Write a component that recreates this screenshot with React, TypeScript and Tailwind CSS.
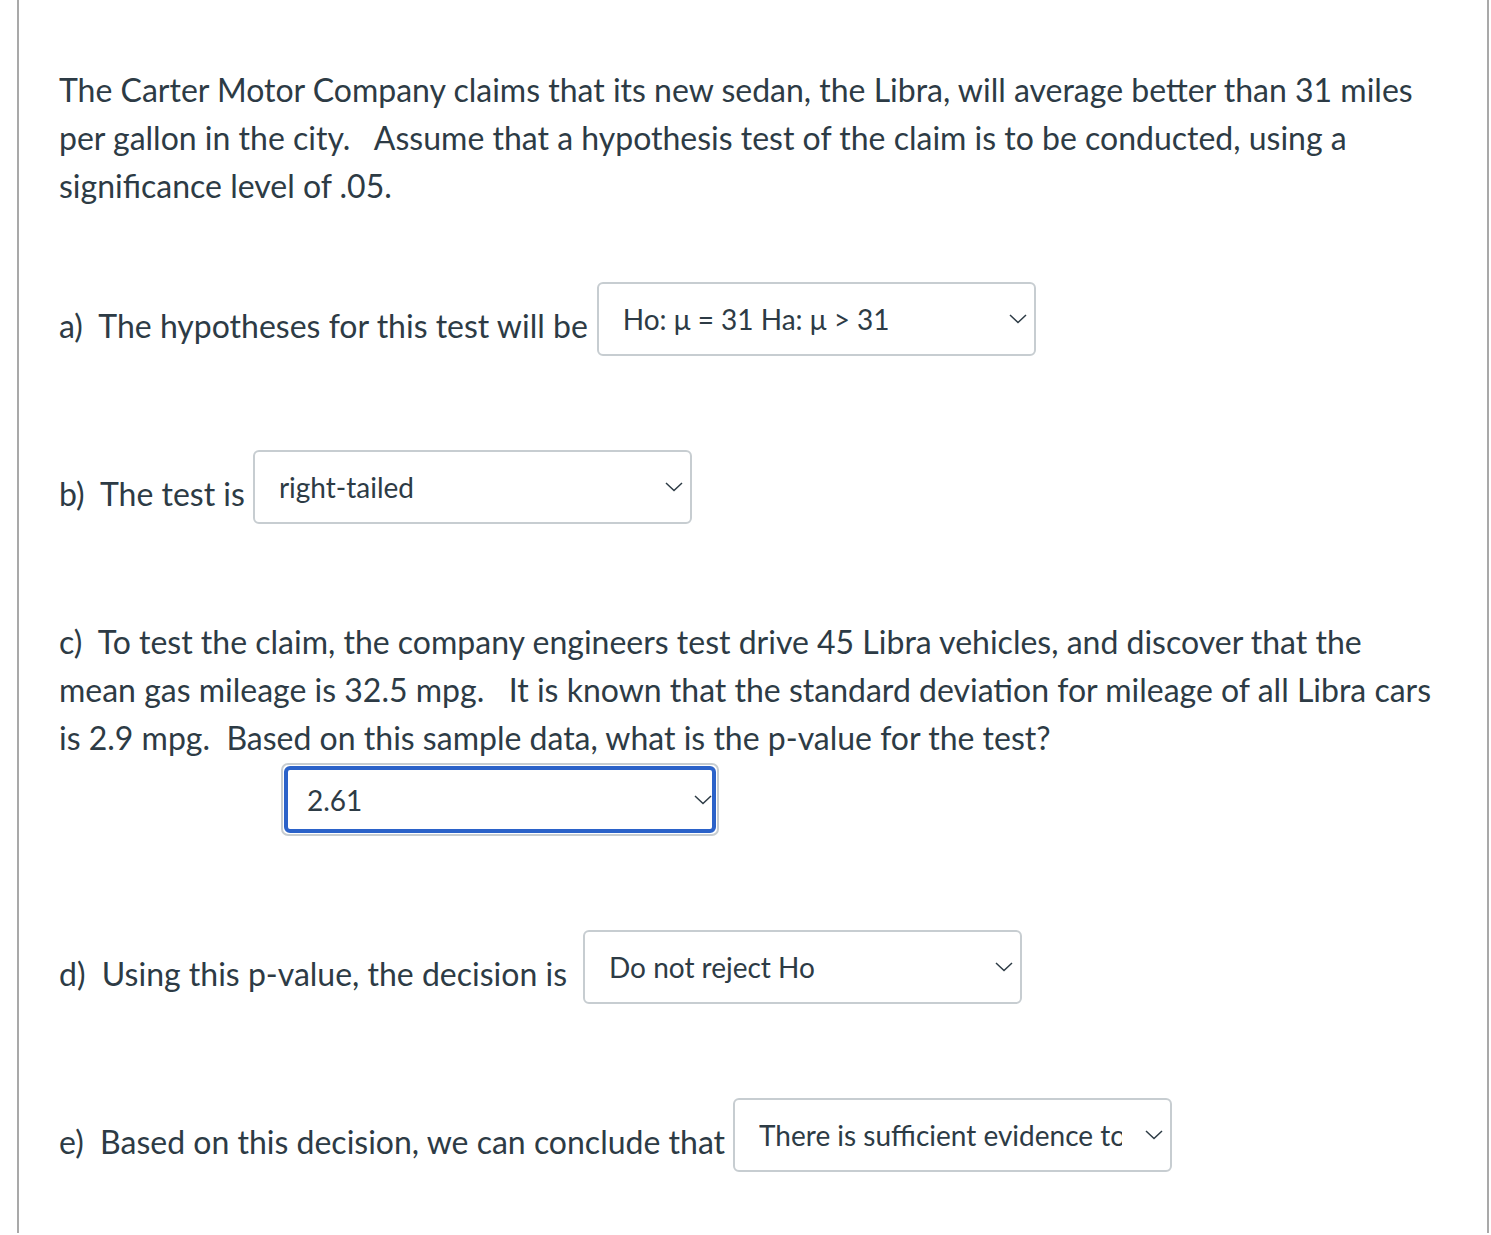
import React from "react";

const Chevron = () => (
  <svg width="18" height="10" viewBox="0 0 18 10" fill="none" className="block">
    <polyline points="1,1 9,8.5 17,1" stroke="#2d3b45" strokeWidth="1.5" strokeLinejoin="miter" />
  </svg>
);

const Select = ({ value }: { value: string }) => (
  <div className="relative flex h-[74px] w-[439px] shrink-0 items-center rounded-[6px] border-2 border-[#c7cdd1] bg-white">
    <span className="ml-[24px] mr-[48px] min-w-0 flex-1 overflow-hidden whitespace-nowrap text-[28px] leading-[36px]">{value}</span>
    <span className="absolute right-[7px] top-1/2 -translate-y-1/2">
      <Chevron />
    </span>
  </div>
);

export default function App() {
  return (
    <div className="min-h-[1235px] bg-white">
      <div
        className="ml-[17px] h-[1233px] w-[1472px] border-x-2 border-[#a9a9a9] pl-[40px] pr-[50px] pt-[66px] text-[#2d3b45]"
        style={{ fontFamily: "Lato, 'Open Sans', sans-serif" }}
      >
        <p className="text-[32px] leading-[48px]">
          The Carter Motor Company claims that its new sedan, the Libra, will average better than 31 miles per gallon in the city.&nbsp;&nbsp; Assume that a hypothesis test of the claim is to be conducted, using a significance level of .05.
        </p>

        <div className="mt-[72px] flex items-start">
          <span className="mt-[20px] text-[32px] leading-[48px]">a)&nbsp; The hypotheses for this test will be</span>
          <div className="ml-[9px]">
            <Select value="Ho: μ = 31 Ha: μ > 31" />
          </div>
        </div>

        <div className="mt-[94px] flex items-start">
          <span className="mt-[20px] text-[32px] leading-[48px]">b)&nbsp; The test is</span>
          <div className="ml-[8px]">
            <Select value="right-tailed" />
          </div>
        </div>

        <p className="mt-[94px] text-[32px] leading-[48px]">
          c)&nbsp; To test the claim, the company engineers test drive 45 Libra vehicles, and discover that the mean gas mileage is 32.5 mpg.&nbsp;&nbsp; It is known that the standard deviation for mileage of all Libra cars is 2.9 mpg.&nbsp; Based on this sample data, what is the p-value for the test?
        </p>
        <div className="relative ml-[222px] mt-[1px] flex h-[73px] w-[438px] items-center rounded-[7px] border-2 border-[#c7cdd1] bg-white">
          <span className="pl-[24px] text-[28px] leading-[36px]">2.61</span>
          <span className="absolute right-[5px] top-1/2 -translate-y-1/2">
            <Chevron />
          </span>
          <div className="pointer-events-none absolute inset-[1px] rounded-[6px] border-[4px] border-[#2b62c9]" />
        </div>

        <div className="mt-[94px] flex items-start">
          <span className="mt-[20px] text-[32px] leading-[48px]">d)&nbsp; Using this p-value, the decision is</span>
          <div className="ml-[16px]">
            <Select value="Do not reject Ho" />
          </div>
        </div>

        <div className="mt-[94px] flex items-start">
          <span className="mt-[20px] text-[32px] leading-[48px]">e)&nbsp; Based on this decision, we can conclude that</span>
          <div className="ml-[8px]">
            <Select value="There is sufficient evidence to support the claim" />
          </div>
        </div>
      </div>
    </div>
  );
}
